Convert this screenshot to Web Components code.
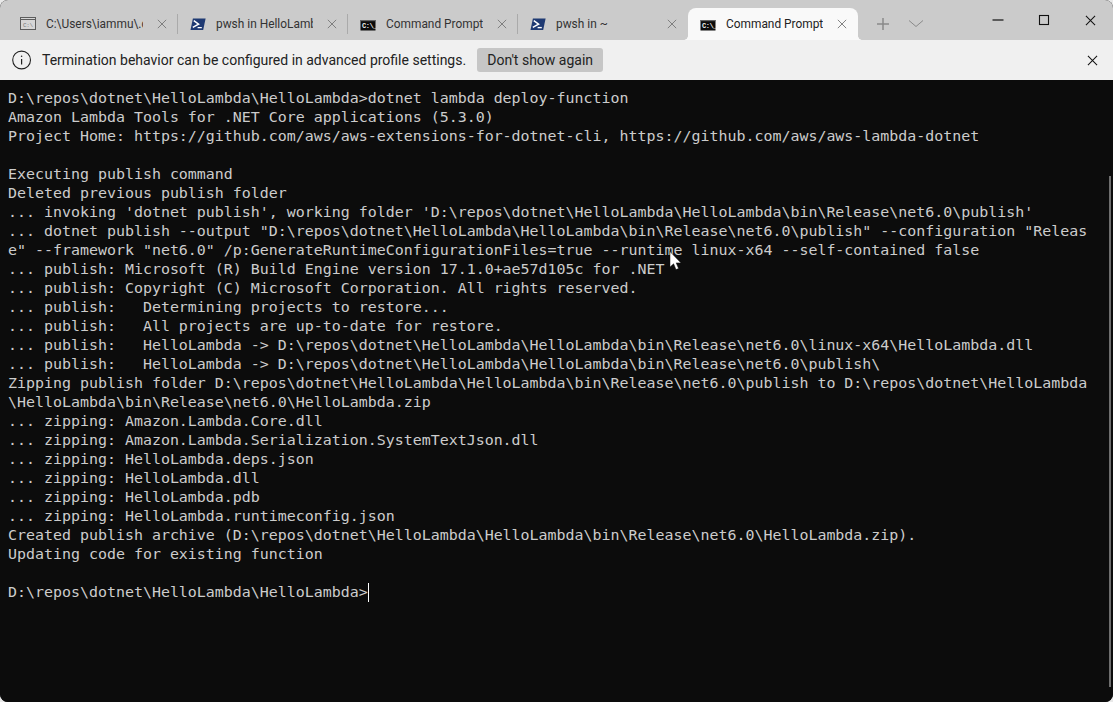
<!DOCTYPE html>
<html>
<head>
<meta charset="utf-8">
<title>Terminal</title>
<style>
  html, body { margin: 0; height: 100%; background: #e9e9e9; }
</style>
</head>
<body>
<term-window>
  <tab-strip slot="top">
    <term-tab icon="cmd-outline">C:\Users\iammu\.dotnet</term-tab>
    <term-tab icon="pwsh">pwsh in HelloLambda</term-tab>
    <term-tab icon="cmd">Command Prompt</term-tab>
    <term-tab icon="pwsh">pwsh in ~</term-tab>
    <term-tab icon="cmd" active>Command Prompt</term-tab>
  </tab-strip>
  <info-bar slot="top" action="Don't show again">Termination behavior can be configured in advanced profile settings.</info-bar>
  <term-view>D:\repos\dotnet\HelloLambda\HelloLambda&gt;dotnet lambda deploy-function
Amazon Lambda Tools for .NET Core applications (5.3.0)
Project Home: https://github.com/aws/aws-extensions-for-dotnet-cli, https://github.com/aws/aws-lambda-dotnet

Executing publish command
Deleted previous publish folder
... invoking 'dotnet publish', working folder 'D:\repos\dotnet\HelloLambda\HelloLambda\bin\Release\net6.0\publish'
... dotnet publish --output "D:\repos\dotnet\HelloLambda\HelloLambda\bin\Release\net6.0\publish" --configuration "Releas
e" --framework "net6.0" /p:GenerateRuntimeConfigurationFiles=true --runtime linux-x64 --self-contained false
... publish: Microsoft (R) Build Engine version 17.1.0+ae57d105c for .NET
... publish: Copyright (C) Microsoft Corporation. All rights reserved.
... publish:   Determining projects to restore...
... publish:   All projects are up-to-date for restore.
... publish:   HelloLambda -&gt; D:\repos\dotnet\HelloLambda\HelloLambda\bin\Release\net6.0\linux-x64\HelloLambda.dll
... publish:   HelloLambda -&gt; D:\repos\dotnet\HelloLambda\HelloLambda\bin\Release\net6.0\publish\
Zipping publish folder D:\repos\dotnet\HelloLambda\HelloLambda\bin\Release\net6.0\publish to D:\repos\dotnet\HelloLambda
\HelloLambda\bin\Release\net6.0\HelloLambda.zip
... zipping: Amazon.Lambda.Core.dll
... zipping: Amazon.Lambda.Serialization.SystemTextJson.dll
... zipping: HelloLambda.deps.json
... zipping: HelloLambda.dll
... zipping: HelloLambda.pdb
... zipping: HelloLambda.runtimeconfig.json
Created publish archive (D:\repos\dotnet\HelloLambda\HelloLambda\bin\Release\net6.0\HelloLambda.zip).
Updating code for existing function

D:\repos\dotnet\HelloLambda\HelloLambda&gt;<term-caret></term-caret></term-view>
</term-window>

<script>
const UI_FONT = `Roboto, "Noto Sans", sans-serif`;

const ICONS = {
  'cmd': `<svg width="16" height="16" viewBox="0 0 16 16">
      <rect x="0.5" y="4" width="15" height="10.5" fill="#0c0c0c"/>
      <rect x="0.5" y="4" width="15" height="1.2" fill="#666"/>
      <text x="2" y="12.4" font-family="Liberation Mono, monospace" font-size="7" font-weight="700" fill="#eee" letter-spacing="-0.5">C:\\_</text>
    </svg>`,
  'cmd-outline': `<svg width="16" height="16" viewBox="0 0 16 16">
      <rect x="0.5" y="1.5" width="15" height="12" fill="#d6d6d6" stroke="#5c5c5c"/>
      <line x1="1" y1="3.5" x2="15" y2="3.5" stroke="#5c5c5c"/>
      <text x="3" y="11" font-family="Liberation Mono, monospace" font-size="6" fill="#777" letter-spacing="-0.4">C:\\</text>
    </svg>`,
  'pwsh': `<svg width="16" height="16" viewBox="0 0 16 16">
      <path d="M2.9 2.5H15.6L13.2 14H0.5Z" fill="#1f3a73"/>
      <path d="M3.8 4.6L8.6 8.1L2.8 11.4" fill="none" stroke="#fff" stroke-width="1.5"/>
      <path d="M7.6 11.6H11.8" stroke="#fff" stroke-width="1.4"/>
    </svg>`
};

const X_ICON = size => `<svg width="${size}" height="${size}" viewBox="0 0 12 12"><path d="M1 1L11 11M11 1L1 11" fill="none" stroke="currentColor" stroke-width="1.1"/></svg>`;

class TermWindow extends HTMLElement {
  connectedCallback() {
    this.attachShadow({mode: 'open'}).innerHTML = `
      <style>
        :host { display: flex; flex-direction: column; width: 1113px; height: 702px; overflow: hidden;
                border-radius: 8px; background: #0c0c0c; position: relative; }
        main { flex: 1; min-height: 0; display: flex; }
      </style>
      <slot name="top"></slot>
      <main><slot></slot></main>
      <mouse-pointer></mouse-pointer>`;
  }
}

class TabStrip extends HTMLElement {
  connectedCallback() {
    this.attachShadow({mode: 'open'}).innerHTML = `
      <style>
        :host { display: flex; height: 40px; background: #cbcbcb; padding-left: 8px; box-sizing: border-box; align-items: flex-end; }
        .tabs { display: flex; }
        .add { display: flex; align-items: center; height: 32px; padding-left: 17px; gap: 17px; color: #8a8a8a; }
        svg { display: block; }
        .ctl { margin-left: auto; display: flex; align-self: flex-start; height: 40px; align-items: center; color: #111; }
        .ctl span { width: 46px; display: flex; justify-content: center; }
      </style>
      <div class="tabs"><slot></slot></div>
      <div class="add">
        <svg width="16" height="16" viewBox="0 0 16 16"><path d="M8 2V14M2 8H14" stroke="currentColor" stroke-width="1.5"/></svg>
        <svg width="16" height="16" viewBox="0 0 16 16"><path d="M1 4.5L8 10.5L15 4.5" fill="none" stroke="currentColor" stroke-width="1"/></svg>
      </div>
      <div class="ctl">
        <span><svg width="12" height="12" viewBox="0 0 12 12"><path d="M0.5 6H11.5" stroke="currentColor" stroke-width="1.2"/></svg></span>
        <span><svg width="12" height="12" viewBox="0 0 12 12"><rect x="1.5" y="1.5" width="9" height="9" fill="none" stroke="currentColor" stroke-width="1.1"/></svg></span>
        <span>${X_ICON(11)}</span>
      </div>`;
  }
}

class TermTab extends HTMLElement {
  connectedCallback() {
    this.attachShadow({mode: 'open'}).innerHTML = `
      <style>
        :host { display: flex; align-items: center; position: relative; width: 170px; height: 32px; box-sizing: border-box;
                padding-left: 12px; font: 11.9px ${UI_FONT}; color: #333; }
        :host([active]) { background: #f9f9f9; border-radius: 8px 8px 0 0; color: #222; }
        :host(:not([active]):not(:nth-last-child(2)))::after { content: ""; position: absolute; right: 0; top: 6px; height: 20px; width: 1px; background: #aaa; }
        :host([active])::before, :host([active])::after { content: ""; position: absolute; bottom: 0; width: 4px; height: 4px; }
        :host([active])::before { left: -4px; background: radial-gradient(circle at 0 0, transparent 3.5px, #f9f9f9 4px); }
        :host([active])::after { right: -4px; background: radial-gradient(circle at 100% 0, transparent 3.5px, #f9f9f9 4px); }
        svg { display: block; flex: none; }
        .t { margin-left: 10px; width: 97px; overflow: hidden; white-space: nowrap; }
        .x { margin-left: 14px; color: #777; }
      </style>
      ${ICONS[this.getAttribute('icon')]}
      <div class="t"><slot></slot></div>
      <div class="x">${X_ICON(10)}</div>`;
  }
}

class InfoBar extends HTMLElement {
  connectedCallback() {
    this.attachShadow({mode: 'open'}).innerHTML = `
      <style>
        :host { display: flex; align-items: center; height: 40px; background: #f0f0f0; box-sizing: border-box; padding-left: 12px;
                font: 14px ${UI_FONT}; color: #222; }
        svg { display: block; flex: none; }
        .msg { margin-left: 10px; }
        button { margin-left: 11px; height: 24px; width: 126px; padding: 0; border: 0; border-radius: 3px; background: #c6c6c6; color: #222; font: inherit; }
        .x { margin-left: auto; margin-right: 15px; color: #111; }
      </style>
      <svg width="20" height="20" viewBox="0 0 20 20">
        <circle cx="9.6" cy="10" r="8.9" fill="none" stroke="#222" stroke-width="1.1"/>
        <path d="M9.6 9V14.5" stroke="#222" stroke-width="1.2"/><circle cx="9.6" cy="6.3" r="0.8" fill="#222"/>
      </svg>
      <div class="msg"><slot></slot></div>
      <button>${this.getAttribute('action')}</button>
      <div class="x">${X_ICON(11)}</div>`;
  }
}

class TermView extends HTMLElement {
  connectedCallback() {
    // no whitespace around the slot: the host is white-space: pre
    this.attachShadow({mode: 'open'}).innerHTML = `<style>
        :host { display: block; flex: 1; position: relative; padding: 9px 0 0 8px; white-space: pre; color: #ccc; background: #0c0c0c;
                font: 14.95px/19px "DejaVu Sans Mono", "Liberation Mono", monospace; }
        .bar { position: absolute; right: 2px; top: 96px; bottom: 15px; width: 2px; background: #6e6e6e; }
      </style><slot></slot><div class="bar"></div>`;
  }
}

class TermCaret extends HTMLElement {
  connectedCallback() {
    this.attachShadow({mode: 'open'}).innerHTML = `
      <style>:host { display: inline-block; width: 1px; height: 19px; background: #fff; vertical-align: top; }</style>`;
  }
}

// the mouse arrow lies over the terminal text
class MousePointer extends HTMLElement {
  connectedCallback() {
    this.attachShadow({mode: 'open'}).innerHTML = `
      <style>:host { position: absolute; left: 669px; top: 251px; width: 13px; height: 20px; } svg { display: block; }</style>
      <svg width="13" height="20" viewBox="0 0 13 20">
        <path d="M1 0.6V16L4.6 12.8L7 18.6L9.6 17.5L7.2 11.9H12Z" fill="#fff" stroke="#111" stroke-width="0.5"/>
      </svg>`;
  }
}

customElements.define('term-window', TermWindow);
customElements.define('tab-strip', TabStrip);
customElements.define('term-tab', TermTab);
customElements.define('info-bar', InfoBar);
customElements.define('term-view', TermView);
customElements.define('term-caret', TermCaret);
customElements.define('mouse-pointer', MousePointer);
</script>
</body>
</html>
